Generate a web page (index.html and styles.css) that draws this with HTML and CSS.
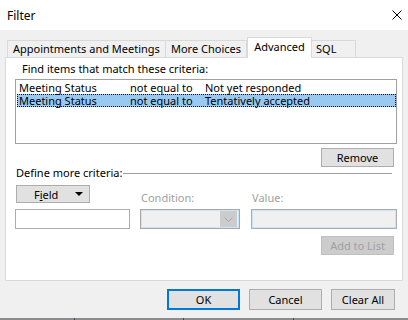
FILE: index.html
```html
<!DOCTYPE html>
<html lang="en">
<head>
  <meta charset="UTF-8">
  <title>Filter</title>
  <meta name="viewport" content="width=device-width, initial-scale=1.0">
  <link rel="stylesheet" href="styles.css">
</head>
<body>

<div class="dialog">

  <!-- Title bar -->
  <div class="titlebar">
    <span class="title">Filter</span>
    <svg class="close" width="10" height="10" viewBox="0 0 10 10">
      <path d="M0.5 0.5 L9.5 9.5 M9.5 0.5 L0.5 9.5" stroke="#000" stroke-width="1" fill="none"/>
    </svg>
  </div>

  <div class="content">

    <!-- Tabs -->
    <div class="tabs">
      <div class="tab tab-appts">Appointments and Meetings</div>
      <div class="tab tab-more">More Choices</div>
      <div class="tab tab-adv selected">Advanced</div>
      <div class="tab tab-sql">SQL</div>
    </div>

    <!-- Advanced page -->
    <div class="panel">
      <div class="find-label">Find items that match these criteria:</div>
      <div class="listbox">
        <div class="row">
          <span class="col-field">Meeting Status</span>
          <span class="col-cond">not equal to</span>
          <span>Not yet responded</span>
        </div>
        <div class="row selected">
          <span class="col-field">Meeting Status</span>
          <span class="col-cond">not equal to</span>
          <span>Tentatively accepted</span>
        </div>
      </div>

      <div class="actions">
        <button class="button">Remove</button>
      </div>

      <div class="group-title"><span>Define more criteria:</span></div>

      <div class="criteria">
        <button class="button field-button"><span>F<u>i</u>eld</span><span class="arrow"></span></button>
        <label class="muted">Condition:</label>
        <label class="muted">Value:</label>
        <input class="textbox" type="text">
        <div class="combo">
          <span class="combo-btn">
            <svg width="9" height="5" viewBox="0 0 9 5"><path d="M0.5 0.5 L4.5 4.5 L8.5 0.5" stroke="#a6a6a6" stroke-width="1" fill="none"/></svg>
          </span>
        </div>
        <div class="textbox disabled"></div>
      </div>

      <div class="actions add-row">
        <button class="button" disabled>Add to List</button>
      </div>
    </div>

    <!-- Dialog buttons -->
    <div class="footer">
      <button class="button default">OK</button>
      <button class="button">Cancel</button>
      <button class="button clear">Clear All</button>
    </div>
  </div>

  <div class="strip">
    <span></span><span></span><span></span><span></span>
  </div>
</div>

</body>
</html>
```

FILE: styles.css
```css
body {
  margin: 0;
  font-family: "Noto Sans", sans-serif;
  font-size: 11px;
  color: #000;
  background-color: #f0f0f0;
}

.dialog {
  width: 408px;
  height: 320px;
  overflow: hidden;
}

.titlebar {
  height: 30px;
  background: #fff;
  display: flex;
  align-items: center;
  justify-content: space-between;
  padding: 0 6px 0 7px;
  box-sizing: border-box;
}

.title {
  font-size: 12px;
}

.content {
  padding: 0 5px;
}

/* Tabs */

.tabs {
  display: flex;
  align-items: flex-end;
  height: 20px;
  margin-top: 7px;
  padding-left: 2px;
}

.tab {
  box-sizing: border-box;
  height: 17px;
  line-height: 16px;
  border: 1px solid #d9d9d9;
  border-bottom: none;
  background: #f0f0f0;
  text-align: center;
  white-space: nowrap;
}

.tab-appts { width: 159px; text-align: left; padding-left: 5px; }
.tab-more { width: 82px; margin-left: -1px; }
.tab-adv { width: 65px; }
.tab-sql { width: 45px; margin-left: -1px; text-align: left; padding-left: 4px; }

.tab.selected {
  position: relative;
  z-index: 1;
  height: 21px;
  margin-bottom: -1px;
  line-height: 18px;
  padding-bottom: 2px;
  background: #fff;
}

/* Panel */

.panel {
  box-sizing: border-box;
  height: 224px;
  border: 1px solid #d9d9d9;
  background: #fff;
  padding: 0 5px 0 9px;
}

.find-label {
  margin-top: 3px;
  line-height: 16px;
  padding-left: 7px;
}

.listbox {
  box-sizing: border-box;
  margin-top: 2px;
  height: 65px;
  border: 1px solid #a0a0a0;
  padding: 1px 0 1px 1px;
}

.row {
  display: flex;
  height: 13px;
  line-height: 13px;
  padding-left: 2px;
  white-space: nowrap;
}

.row.selected {
  background: #99c9ef;
  outline: 1px dotted #000;
  outline-offset: -1px;
}

.col-field { width: 111px; }
.col-cond { width: 75px; }

.actions {
  display: flex;
  justify-content: flex-end;
  padding-right: 3px;
  margin-top: 4px;
}

.add-row {
  margin-top: 7px;
}

.button {
  box-sizing: border-box;
  width: 73px;
  height: 19px;
  padding: 0;
  font-family: "Noto Sans", sans-serif;
  font-size: 11px;
  color: #000;
  background: #e1e1e1;
  border: 1px solid #adadad;
  border-radius: 0;
}

.button:disabled {
  background: #cccccc;
  border-color: #bfbfbf;
  color: #a0a0a0;
}

.group-title {
  display: flex;
  align-items: center;
  height: 12px;
  line-height: 12px;
  padding-left: 1px;
  padding-right: 5px;
}

.group-title::after {
  content: "";
  flex: 1;
  height: 1px;
  margin-left: 1px;
  background: #a0a0a0;
}

/* Criteria grid */

.criteria {
  display: grid;
  grid-template-columns: 115px 101px 1fr;
  column-gap: 10px;
  row-gap: 6px;
  margin-top: 6px;
}

.field-button {
  display: flex;
  align-items: center;
  width: 74px;
  height: 18px;
  margin-left: 1px;
  padding-left: 17px;
  padding-right: 6px;
}

.arrow {
  margin-left: auto;
  width: 0;
  height: 0;
  border-left: 4px solid transparent;
  border-right: 4px solid transparent;
  border-top: 4px solid #000;
}

.muted {
  color: #a0a0a0;
  align-self: end;
  line-height: 14px;
  margin-bottom: -2px;
  padding-left: 1px;
}

.textbox {
  box-sizing: border-box;
  width: 100%;
  height: 20px;
  margin: 0;
  border: 1px solid #adadad;
  background: #fff;
}

.textbox.disabled {
  background: #f0f0f0;
  box-shadow: inset 0 0 0 1px #cce4f7;
}

.combo {
  box-sizing: border-box;
  width: 100px;
  height: 20px;
  border: 1px solid #a8a8a8;
  box-shadow: inset 0 0 0 1px #cce4f7;
  background: #f0f0f0;
  display: flex;
  justify-content: flex-end;
  padding: 1px;
}

.combo-btn {
  width: 17px;
  height: 16px;
  margin: 0 1px 0 0;
  background: #cccccc;
  display: flex;
  align-items: center;
  justify-content: center;
}

/* Footer */

.footer {
  display: flex;
  justify-content: flex-end;
  gap: 9px;
  margin-top: 8px;
  padding-right: 8px;
}

.footer .button {
  height: 21px;
}

.footer .clear {
  width: 64px;
}

.button.default {
  border: 2px solid #0078d7;
}

.strip {
  display: grid;
  grid-template-columns: 74px 109px 110px 1fr;
  height: 2px;
  margin-top: 8px;
  background: #8c8c8c;
}

.strip span + span {
  border-left: 1px solid #2b4a7a;
}
```
